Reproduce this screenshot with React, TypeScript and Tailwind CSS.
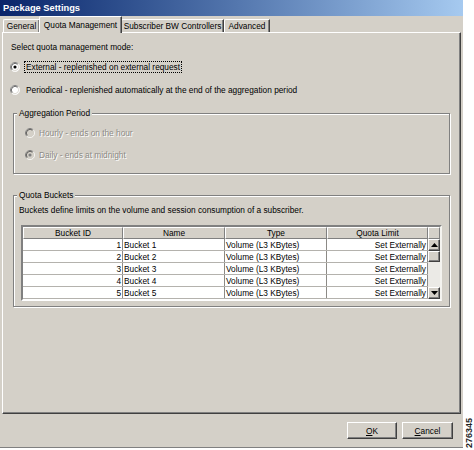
import React from "react";

function Radio({ checked, disabled }: { checked?: boolean; disabled?: boolean }) {
  return (
    <svg width="10" height="10" viewBox="0 0 12 12" className="shrink-0">
      <circle cx="6" cy="6" r="5.5" fill={disabled ? "#d4d0c8" : "#ffffff"} />
      <path d="M2.11 9.89 A5.5 5.5 0 0 1 9.89 2.11" stroke="#808080" strokeWidth="1" fill="none" />
      <path d="M2.82 9.18 A4.5 4.5 0 0 1 9.18 2.82" stroke="#404040" strokeWidth="1" fill="none" />
      <path d="M9.89 2.11 A5.5 5.5 0 0 1 2.11 9.89" stroke="#ffffff" strokeWidth="1" fill="none" />
      <path d="M9.18 2.82 A4.5 4.5 0 0 1 2.82 9.18" stroke="#d4d0c8" strokeWidth="1" fill="none" />
      {checked && <circle cx="6" cy="6" r="1.9" fill={disabled ? "#808080" : "#000000"} />}
    </svg>
  );
}

function Arrow({ up }: { up?: boolean }) {
  return (
    <svg width="7" height="4" viewBox="0 0 7 4">
      <path d={up ? "M3.5 0 L7 4 L0 4 Z" : "M0 0 L7 0 L3.5 4 Z"} fill="#000" />
    </svg>
  );
}

const rows = [1, 2, 3, 4, 5];

export default function App() {
  return (
    <div className="w-[474px] h-[450px] bg-white flex font-['Liberation_Sans',Arial,sans-serif] text-[8.3px] leading-[10px] text-black overflow-hidden">
      <div className="w-[463px] h-[448px] shrink-0 bg-[#d4d0c8] flex flex-col border-b border-[#808080]">
        {/* Title bar */}
        <div className="h-[16px] shrink-0 bg-gradient-to-r from-[#0a246a] to-[#a6caf0] flex items-center pl-[3px] text-white font-bold text-[9.3px]">
          Package Settings
        </div>

        {/* Tabs */}
        <div className="h-[16px] shrink-0 flex items-end pl-[3px]">
          <div className="w-[37px] h-[13px] flex items-center justify-center border-t border-l border-white border-r border-r-[#404040] rounded-tl-[2px] shadow-[inset_-1px_0_0_#808080]">
            General
          </div>
          <div className="relative z-10 w-[83px] h-[17px] -mb-px -mx-px flex items-center justify-center bg-[#d4d0c8] border-t border-l border-white border-r border-r-[#404040] rounded-tl-[2px] shadow-[inset_-1px_0_0_#808080] pb-px">
            Quota Management
          </div>
          <div className="w-[103px] h-[13px] flex items-center justify-center border-t border-l border-white border-r border-r-[#404040] rounded-tl-[2px] shadow-[inset_-1px_0_0_#808080]">
            Subscriber BW Controllers
          </div>
          <div className="w-[46px] h-[13px] flex items-center justify-center border-t border-l border-white border-r border-r-[#404040] rounded-tl-[2px] shadow-[inset_-1px_0_0_#808080]">
            Advanced
          </div>
        </div>

        {/* Tab panel */}
        <div className="mx-[2px] h-[382px] shrink-0 flex flex-col border-t border-l border-white border-r border-b border-r-[#404040] border-b-[#404040] shadow-[inset_-1px_-1px_0_#808080]">
          <div className="mt-[9px] ml-[8px] h-[10px]">Select quota management mode:</div>

          <div className="mt-[9px] ml-[7px] h-[12px] flex items-center">
            <Radio checked />
            <span className="ml-[4px] px-px h-[12px] flex items-center border border-dotted border-black">
              External - replenished on external request
            </span>
          </div>

          <div className="mt-[11px] ml-[7px] h-[12px] flex items-center">
            <Radio />
            <span className="ml-[4px] px-px h-[12px] flex items-center border border-transparent">
              Periodical - replenished automatically at the end of the aggregation period
            </span>
          </div>

          <fieldset className="mt-[12px] mx-[10px] border border-[#808080] shadow-[inset_1px_1px_0_#ffffff,1px_1px_0_#ffffff] pb-[12px]">
            <legend className="ml-[3px] px-[2px] h-[10px] bg-[#d4d0c8]">Aggregation Period</legend>
            <div className="mt-[9px] ml-[11px] h-[12px] flex items-center">
              <Radio disabled />
              <span className="ml-[4px] text-[#8d8b86] [text-shadow:1px_1px_0_#ffffff]">Hourly - ends on the hour</span>
            </div>
            <div className="mt-[10px] ml-[11px] h-[12px] flex items-center">
              <Radio disabled checked />
              <span className="ml-[4px] text-[#8d8b86] [text-shadow:1px_1px_0_#ffffff]">Daily - ends at midnight</span>
            </div>
          </fieldset>

          <fieldset className="mt-[16px] mx-[10px] border border-[#808080] shadow-[inset_1px_1px_0_#ffffff,1px_1px_0_#ffffff] pb-[5px]">
            <legend className="ml-[3px] px-[2px] h-[10px] bg-[#d4d0c8]">Quota Buckets</legend>
            <div className="mt-[5px] ml-[5px] h-[10px]">
              Buckets define limits on the volume and session consumption of a subscriber.
            </div>

            {/* Table */}
            <div className="mt-[10px] ml-[7px] w-[421px] h-[76px] flex border-2 border-t-[#808080] border-l-[#808080] border-b-white border-r-[#f4f3ef] shadow-[inset_1px_1px_0_#404040]">
              <div className="flex-1 flex flex-col">
                <div className="h-[12px] shrink-0 grid grid-cols-[100px_102px_102px_101px]">
                  {["Bucket ID", "Name", "Type", "Quota Limit"].map((h) => (
                    <div
                      key={h}
                      className="flex items-center justify-center border-t border-l border-white border-r border-b border-r-[#808080] border-b-[#808080] bg-[#d4d0c8]"
                    >
                      {h}
                    </div>
                  ))}
                </div>
                {rows.map((n) => (
                  <div key={n} className="h-[12px] shrink-0 grid grid-cols-[100px_102px_102px_101px] bg-white border-b border-[#b4b2ad]">
                    <div className="flex items-center justify-end pr-px border-r border-[#8c8a86]">{n}</div>
                    <div className="flex items-center pl-px border-r border-[#8c8a86]">Bucket {n}</div>
                    <div className="flex items-center pl-px border-r border-[#8c8a86]">Volume (L3 KBytes)</div>
                    <div className="flex items-center justify-end pr-px border-r border-[#8c8a86]">Set Externally</div>
                  </div>
                ))}
              </div>
              <div className="w-[12px] shrink-0 flex flex-col">
                <div className="h-[12px] shrink-0 bg-[#d4d0c8] border-t border-l border-white border-r border-b border-r-[#808080] border-b-[#808080]" />
                <div className="h-[12px] shrink-0 flex items-center justify-center bg-[#d4d0c8] border-t border-l border-white border-r border-b border-r-[#404040] border-b-[#404040] shadow-[inset_-1px_-1px_0_#808080]">
                  <Arrow up />
                </div>
                <div className="h-[11px] shrink-0 bg-[#d4d0c8] border-t border-l border-white border-r border-b border-r-[#404040] border-b-[#404040] shadow-[inset_-1px_-1px_0_#808080]" />
                <div className="flex-1 bg-[#ebeae6]" />
                <div className="h-[12px] shrink-0 flex items-center justify-center bg-[#d4d0c8] border-t border-l border-white border-r border-b border-r-[#404040] border-b-[#404040] shadow-[inset_-1px_-1px_0_#808080]">
                  <Arrow />
                </div>
              </div>
            </div>
          </fieldset>
        </div>

        {/* Buttons */}
        <div className="flex-1 flex justify-end items-start gap-[5px] pr-[10px] pt-[8px]">
          <button className="w-[50px] h-[17px] flex items-center justify-center bg-[#d4d0c8] border-t border-l border-white border-r border-b border-r-[#404040] border-b-[#404040] shadow-[inset_-1px_-1px_0_#808080]">
            <span><span className="underline">O</span>K</span>
          </button>
          <button className="w-[51px] h-[17px] flex items-center justify-center bg-[#d4d0c8] border-t border-l border-white border-r border-b border-r-[#404040] border-b-[#404040] shadow-[inset_-1px_-1px_0_#808080]">
            <span><span className="underline">C</span>ancel</span>
          </button>
        </div>
      </div>

      {/* Figure number */}
      <div className="flex-1 flex items-end justify-center pb-[2px]">
        <span className="[writing-mode:vertical-rl] rotate-180 text-[9px] leading-[10px] font-bold text-[#222]">276345</span>
      </div>
    </div>
  );
}
